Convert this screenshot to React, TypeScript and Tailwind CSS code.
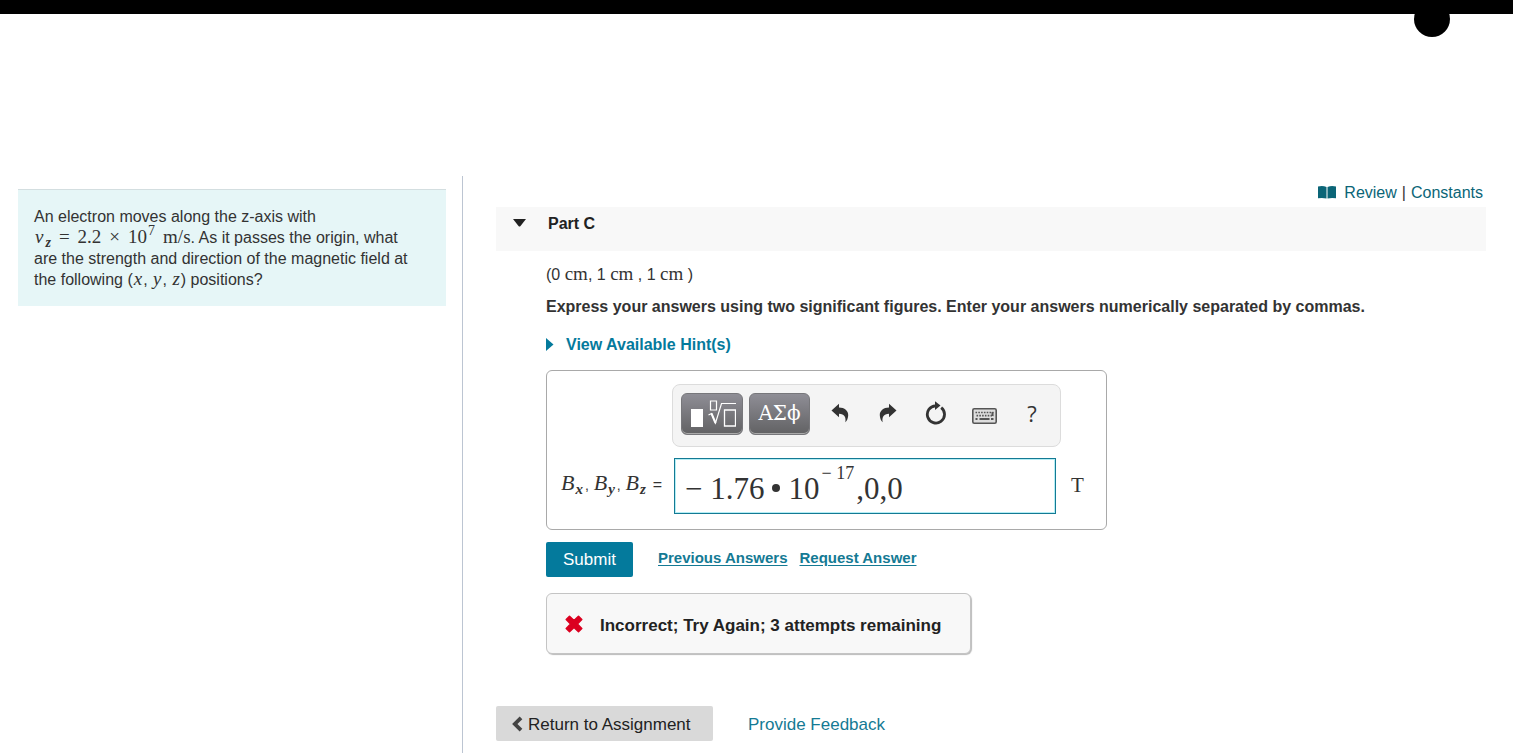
import React from 'react';

type MathProps = { children: React.ReactNode; italic?: boolean };

const Math: React.FC<MathProps> = ({ children, italic }) => (
  <span className={`font-['Liberation_Serif',serif] text-[19px] leading-none ${italic ? 'mx-px italic' : ''}`}>{children}</span>
);

const BookIcon = () => (
  <svg width="18" height="13" viewBox="0 0 18 13" fill="#0b6577" className="mb-px" aria-hidden="true">
    <path d="M0 .6Q4.500 -.6 8.500 1V12.500Q4.500 11.600 0 12.300Z" />
    <path d="M9.500 1Q13.500 -.6 18 .6V12.300Q13.500 11.600 9.500 12.500Z" />
  </svg>
);

const RootIcon = () => (
  <svg width="48" height="30" viewBox="0 0 48 30" fill="none" stroke="#fff" className="shrink-0" aria-hidden="true">
    <path d="M3 10H15V28H3Z" fill="#fff" stroke="none" />
    <path d="M22.500 2H28.500V11H22.500Z" strokeWidth="1.200" />
    <path d="M20.500 16L23.500 14.500L27.500 24L33.500 4.500H49" strokeWidth="1.200" />
    <path d="M23.500 14.500L27.500 24" strokeWidth="2" />
    <path d="M36.500 11H47.500V27H36.500Z" strokeWidth="1.300" />
  </svg>
);

const ArrowIcon: React.FC<{ flip?: boolean }> = ({ flip }) => (
  <svg width="18" height="20" viewBox="0 0 18 20" fill="#333" className={flip ? '-scale-x-100' : ''} aria-hidden="true">
    <path d="M.5 7.500L8 .8V4.500C13.500 4.500 17.500 8 17.200 12.500C17 15.500 16 17.800 14.300 19.300C15.300 14.500 13.500 10.800 8 10.700V14.200Z" />
  </svg>
);

const ResetIcon = () => (
  <svg width="22" height="24" viewBox="0 0 22 24" aria-hidden="true">
    <path d="M16.200 6.600A8.600 8.600 0 1 1 10.500 4.800" fill="none" stroke="#333" strokeWidth="2.800" />
    <path d="M10 .3L15.500 4.600L10 9Z" fill="#333" />
  </svg>
);

const KeyboardIcon = () => (
  <svg width="25" height="16" viewBox="0 0 25 16" fill="none" stroke="#555" aria-hidden="true">
    <rect x=".8" y=".8" width="23.400" height="14.400" rx="1.500" fill="#ddd" strokeWidth="1.600" />
    <path d="M3.500 4.500H21.500" strokeWidth="1.700" strokeDasharray="1.600 1.200" />
    <path d="M4.500 7.700H21.500" strokeWidth="1.700" strokeDasharray="1.600 1.200" />
    <path d="M3.500 11H5.500M7.500 11H17.500M19 11H21.500" strokeWidth="2" />
    <path d="M20.500 4V8" strokeWidth="2" />
  </svg>
);

const ToolButton: React.FC<{ label: string; children: React.ReactNode }> = ({ label, children }) => (
  <button type="button" aria-label={label} className="flex h-10 w-12 shrink-0 items-center justify-center">
    {children}
  </button>
);

const darkButton =
  'flex h-[42px] shrink-0 items-center justify-center rounded-md border border-[#77777b] bg-linear-to-b from-[#8f8e96] to-[#626264] text-white shadow-[inset_0_-1px_0_#aaa]';

const Toolbar = () => (
  <div className="flex h-[63px] items-start rounded-lg border border-[#dcdcdc] bg-[#f4f4f4] pt-2 pl-2">
    <button type="button" aria-label="Templates" className={`${darkButton} w-[62px]`}>
      <RootIcon />
    </button>
    <button
      type="button"
      className={`${darkButton} mx-1.5 w-[61px] pb-0.5 font-['DejaVu_Serif',serif] text-[20px] leading-none`}
    >
      ΑΣϕ
    </button>
    <ToolButton label="Undo"><ArrowIcon /></ToolButton>
    <ToolButton label="Redo"><ArrowIcon flip /></ToolButton>
    <ToolButton label="Reset"><ResetIcon /></ToolButton>
    <ToolButton label="Keyboard shortcuts"><span className="pt-1.5"><KeyboardIcon /></span></ToolButton>
    <button
      type="button"
      className="flex h-10 w-12 shrink-0 items-center justify-center font-['Open_Sans',sans-serif] text-[22px] font-medium text-[#333]"
    >
      ?
    </button>
  </div>
);

const Component: React.FC<{ axis: string }> = ({ axis }) => (
  <span className="flex items-baseline">
    <span className="font-['Liberation_Serif',serif] text-[22px] leading-none italic">B</span>
    <sub className="bottom-[-4px] ml-px mr-0.5 font-['Liberation_Serif',serif] text-[15px] font-bold italic">{axis}</sub>
  </span>
);

const AnswerBox = () => (
  <div className="grid w-fit grid-cols-[111px_389px_auto] gap-y-[11px] rounded-md border border-[#a9a9a9] pt-[13px] pr-[22px] pb-[15px] pl-3.5">
    <div className="col-start-2"><Toolbar /></div>
    <div id="answer-label" className="col-start-1 mr-2.5 flex items-baseline justify-between self-center pb-1 text-sm">
      <span className="flex items-baseline"><Component axis="x" />,</span>
      <span className="flex items-baseline"><Component axis="y" />,</span>
      <Component axis="z" />
      <span className="text-base">=</span>
    </div>
    <div
      role="textbox"
      aria-labelledby="answer-label"
      contentEditable
      suppressContentEditableWarning
      className="mr-[5px] ml-0.5 flex h-14 items-center whitespace-pre border border-[#147a94] px-2.5 pt-1 font-['Liberation_Serif',serif] text-[31px] leading-none text-[#333] shadow-[inset_0_0_0_1px_#b5eef5]"
    >
      <span>− 1.76</span>
      <span className="mx-2 size-2 rounded-full bg-[#333]" />
      <span>10</span>
      <span className="mx-0.5 self-start text-lg leading-5">− 17</span>
      <span>,0,0</span>
    </div>
    <span className="self-center pl-2.5 font-['Liberation_Serif',serif] text-[21px]">T</span>
  </div>
);

const Problem = () => (
  <aside className="w-[462px] shrink-0 pt-[13px] pr-4 pl-[18px]">
    <div className="border-t border-[#d3dee0] bg-[#e6f6f7] px-4 pt-4 pb-4">
      <p className="pr-3 leading-[21px]">
        An electron moves along the z-axis with
        <br />
        <span className="inline-flex items-baseline gap-2 leading-[25px]">
          <span className="flex items-baseline">
            <Math italic>v</Math>
            <sub className="bottom-[-4px] ml-px font-['Liberation_Serif',serif] text-[14px] leading-none font-bold italic">z</sub>
          </span>
          <Math>=</Math>
          <Math>2.2</Math>
          <Math>×</Math>
          <span className="flex items-baseline">
            <Math>10</Math>
            <sup className="top-auto bottom-[8px] ml-px font-['Liberation_Serif',serif] text-[14px] leading-none">7</sup>
          </span>
          <Math>m/s</Math>
        </span>
        . As it passes the origin, what are the strength and direction of the magnetic field at
        the following (<Math italic>x</Math>, <Math italic>y</Math>, <Math italic>z</Math>) positions?
      </p>
    </div>
  </aside>
);

const App: React.FC = () => {
  return (
    <div className="flex min-h-screen flex-col bg-white font-['Liberation_Sans',sans-serif] text-base text-[#333]">
      <header className="relative h-3.5 bg-black">
        <div className="absolute top-px right-[63px] size-9 rounded-full bg-black" />
      </header>

      <div className="flex flex-1 pt-[162px]">
        <Problem />
        <main className="flex-1 border-l border-[#bcc5d2] pt-[5px] pr-[27px] pl-[33px]">
          <div className="mb-0.5 flex items-center justify-end pr-[3px] text-[#0b6577]">
            <BookIcon />
            <a href="#review" className="ml-2">Review</a>
            <span className="mx-[5px] text-[#333]">|</span>
            <a href="#constants">Constants</a>
          </div>

          <div className="h-11 bg-[#f8f8f8] pt-[5px]">
            <button type="button" className="flex items-center pl-[17px] font-bold text-[#222]">
              <svg width="13" height="8" viewBox="0 0 13 8" className="mb-0.5" aria-hidden="true">
                <path d="M0 0H13L7.500 7Q6.500 8 5.500 7Z" fill="#222" />
              </svg>
              <span className="ml-[22px]">Part C</span>
            </button>
          </div>

          <div className="pt-3 pl-[50px]">
            <p>
              (0 <Math>cm</Math>, 1 <Math>cm</Math> , 1 <Math>cm</Math> )
            </p>
            <p className="mt-2 font-bold">
              Express your answers using two significant figures. Enter your answers numerically separated by commas.
            </p>
            <button type="button" className="mt-3.5 mb-[13px] flex items-center font-bold text-[#047a9c]">
              <svg width="8" height="13" viewBox="0 0 8 13" className="mb-0.5" aria-hidden="true">
                <path d="M0 0L7.500 6.500L0 13Z" fill="#047a9c" />
              </svg>
              <span className="ml-3">View Available Hint(s)</span>
            </button>

            <AnswerBox />

            <div className="mt-3 flex items-center">
              <button type="button" className="h-[35px] min-w-[87px] rounded-xs bg-[#047a9c] px-4 text-[17px] text-white">Submit</button>
              <a href="#previous" className="ml-[25px] pb-0.5 text-[15px] font-bold text-[#147a94] underline underline-offset-2">Previous Answers</a>
              <a href="#request" className="ml-3 pb-0.5 text-[15px] font-bold text-[#147a94] underline underline-offset-2">Request Answer</a>
            </div>

            <div className="mt-4 flex h-[61px] w-fit min-w-[425px] items-center rounded-md border border-[#c4c4c4] bg-[#f8f8f8] pr-[17px] pl-[18px] text-[17px] font-bold text-[#222] shadow-[1px_1px_1px_#bbb]">
              <svg width="18" height="18" viewBox="0 0 18 18" aria-hidden="true">
                <path
                  d="M4.500 1.200L9 5.600L13.500 1.200L16.800 4.500L12.400 9L16.800 13.500L13.500 16.800L9 12.400L4.500 16.800L1.200 13.500L5.600 9L1.200 4.500Z"
                  fill="#db0020"
                  stroke="#db0020"
                  strokeWidth="1.500"
                  strokeLinejoin="round"
                />
              </svg>
              <span className="ml-[17px] pt-1">Incorrect; Try Again; 3 attempts remaining</span>
            </div>
          </div>

          <div className="mt-[52px] flex items-center text-[17px]">
            <button type="button" className="flex h-[35px] min-w-[217px] items-center rounded-xs bg-[#d9d9d9] px-4 pt-0.5 text-[#222]">
              <svg width="11" height="16" viewBox="0 0 11 16" className="mb-0.5" aria-hidden="true">
                <path d="M9 1.800L2.800 8L9 14.200" fill="none" stroke="#444" strokeWidth="3.800" />
              </svg>
              <span className="ml-[5px]">Return to Assignment</span>
            </button>
            <a href="#feedback" className="ml-[35px] pt-0.5 text-[#147a94]">Provide Feedback</a>
          </div>
        </main>
      </div>
    </div>
  );
};

export default App;
